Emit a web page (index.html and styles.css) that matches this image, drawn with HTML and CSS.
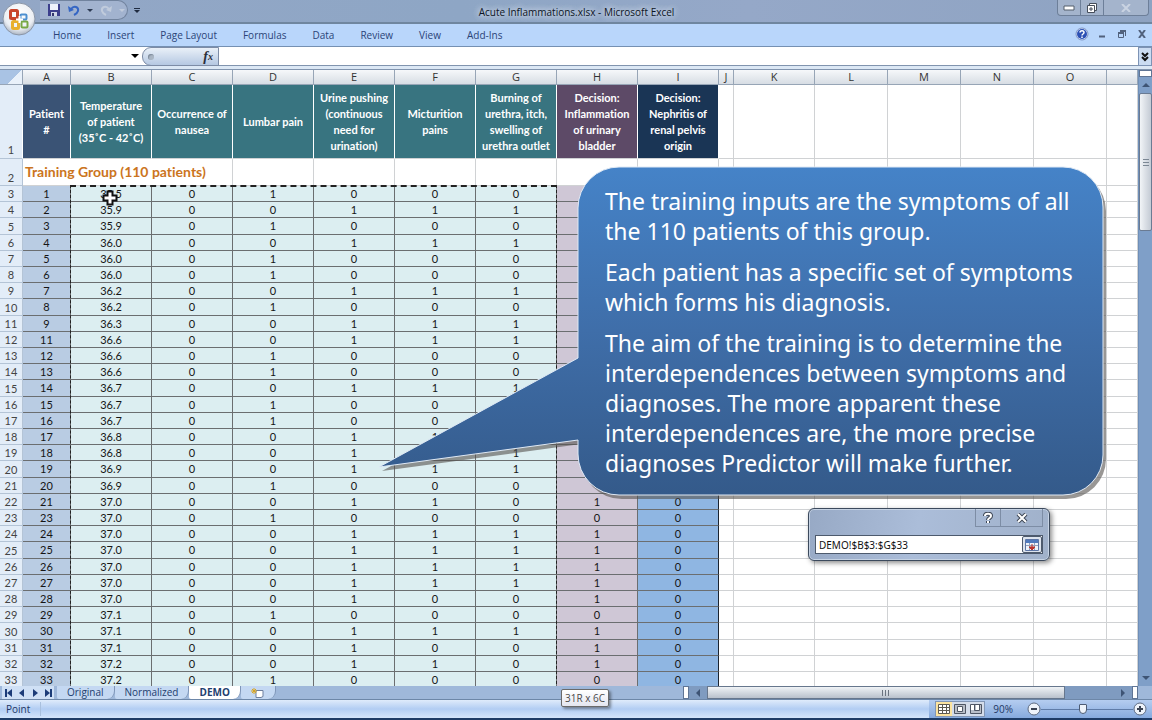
FILE: index.html
```html
<!doctype html>
<html lang="en">
<head>
    <meta charset="utf-8">
    <title>Acute Inflammations.xlsx - Microsoft Excel</title>
    <meta name="viewport" content="width=device-width, initial-scale=1">
    <link rel="stylesheet" href="styles.css">
</head>

<body>
<header class="titlebar">
    <div class="quick-access">
        <button type="button" aria-label="Save">
            <svg width="14" height="14" viewBox="0 0 14 14"><path d="M1 1h12v12H1z" fill="#3c3f8c"/><path d="M3 1h8v6H3z" fill="#eef2fb"/><path d="M4 9h6v4H4z" fill="#cfd6e6"/><path d="M5 10h2v3H5z" fill="#33376e"/></svg>
        </button>
        <button type="button" aria-label="Undo">
            <svg width="12" height="12" viewBox="0 0 12 12"><path d="M3 5c3-4 8-2 7 2-.5 2-2 3-4 4" fill="none" stroke="#3566c4" stroke-width="2"/><path d="M0 2l1 6 5-2z" fill="#3566c4"/></svg>
        </button>
        <span class="caret"></span>
        <button type="button" aria-label="Redo" disabled>
            <svg width="12" height="12" viewBox="0 0 12 12"><path d="M9 5C6 1 1 3 2 7c.5 2 2 3 4 4" fill="none" stroke="#c0cbdc" stroke-width="2"/><path d="M12 2l-1 6-5-2z" fill="#c0cbdc"/></svg>
        </button>
        <span class="caret faded"></span>
    </div>
    <button type="button" class="customize" aria-label="Customize Quick Access Toolbar">
        <svg width="8" height="6" viewBox="0 0 8 6"><path d="M1 .5h6" stroke="#1f2b40"/><path d="M1 2h6L4 5z" fill="#1f2b40"/></svg>
    </button>
    <h1 class="title">Acute Inflammations.xlsx - Microsoft Excel</h1>
    <div class="window-buttons">
        <button type="button" aria-label="Minimize">
            <svg width="12" height="6" viewBox="0 0 12 6"><path d="M1 1h10v4H1z" fill="#fff" stroke="#555e6b"/></svg>
        </button>
        <button type="button" aria-label="Restore">
            <svg width="12" height="12" viewBox="0 0 12 12"><path d="M3.500 1.500h7v7h-7z" fill="#fff" stroke="#454d5a"/><path d="M1.500 3.500h7v7h-7z" fill="#fff" stroke="#454d5a"/><path d="M4 6h2v2H4z" fill="none" stroke="#454d5a"/></svg>
        </button>
        <button type="button" class="close" aria-label="Close">
            <svg width="10" height="8" viewBox="0 0 10 8"><path d="M1 0l8 8M9 0L1 8" stroke="#c9d3e2" stroke-width="2"/></svg>
        </button>
    </div>
</header>

<button type="button" class="office-button" aria-label="Office Button">
    <svg width="36" height="36" viewBox="0 0 36 36">
        <defs>
            <radialGradient id="orb" cx=".5" cy=".35" r=".65">
                <stop offset="0" stop-color="#fff"/>
                <stop offset=".7" stop-color="#eceff4"/>
                <stop offset="1" stop-color="#aab4c2"/>
            </radialGradient>
        </defs>
        <circle cx="18" cy="18" r="16" fill="url(#orb)" stroke="#8b96a8"/>
        <g fill="none" stroke-width="3">
            <rect x="9.500" y="9.500" width="7" height="8" rx="1" stroke="#c8442c"/>
            <rect x="19.500" y="13.500" width="6" height="5" rx="1" stroke="#4d8fd0" stroke-width="2"/>
            <rect x="11.500" y="20.500" width="6" height="7" rx="1" stroke="#e8b02c"/>
            <rect x="20.500" y="20.500" width="6" height="6" rx="1" stroke="#78a844" stroke-width="2"/>
        </g>
        <path d="M15 18.500h7M18.500 15v7" stroke="#fff" stroke-width="2"/>
    </svg>
</button>

<nav class="ribbon">
    <a href="#">Home</a>
    <a href="#">Insert</a>
    <a href="#">Page Layout</a>
    <a href="#">Formulas</a>
    <a href="#">Data</a>
    <a href="#">Review</a>
    <a href="#">View</a>
    <a href="#">Add-Ins</a>
    <div class="book-buttons">
        <button type="button" aria-label="Help">
            <svg width="14" height="14" viewBox="0 0 14 14"><circle cx="7" cy="7" r="6" fill="#dfe9fa" stroke="#7f95c4"/><circle cx="7" cy="7" r="5" fill="#2c50b4"/><path d="M5 5.500c0-2.500 4-2.500 4 0C9 7 7 7 7 8.500M7 9.500V11" fill="none" stroke="#fff" stroke-width="1.500"/></svg>
        </button>
        <button type="button" aria-label="Minimize workbook">
            <svg width="8" height="8" viewBox="0 0 8 8"><path d="M1 6.500h6" stroke="#51617c" stroke-width="2"/></svg>
        </button>
        <button type="button" aria-label="Restore workbook">
            <svg width="8" height="8" viewBox="0 0 8 8"><path d="M2 1h6v5M0 3h6" fill="none" stroke="#51617c" stroke-width="2"/><path d="M.5 3.500h5v4h-5z" fill="none" stroke="#51617c"/></svg>
        </button>
        <button type="button" aria-label="Close workbook">
            <svg width="8" height="8" viewBox="0 0 8 8"><path d="M1 0l6 8M7 0L1 8" stroke="#51617c" stroke-width="2"/></svg>
        </button>
    </div>
</nav>

<div class="formula-bar">
    <input type="text" class="name-box" aria-label="Name Box">
    <button type="button" class="name-arrow" aria-label="Open names"><span class="caret big"></span></button>
    <div class="fx">
        <span class="knob"></span>
        <button type="button" aria-label="Insert Function"><i>f</i><sub>x</sub></button>
    </div>
    <input type="text" class="formula" aria-label="Formula">
    <button type="button" class="expand" aria-label="Expand Formula Bar">
        <svg width="8" height="10" viewBox="0 0 8 10"><path d="M1 1l3 3 3-3M1 5l3 3 3-3" fill="none" stroke="#111" stroke-width="2"/></svg>
    </button>
</div>

<main class="workspace">
    <div class="sheet">
        <table class="grid">
            <colgroup>
                <col class="col-head"><col class="col-id">
                <col class="col-data"><col class="col-data"><col class="col-data"><col class="col-data">
                <col class="col-data"><col class="col-data"><col class="col-data"><col class="col-data">
                <col class="col-gap"><col class="col-data">
                <col class="col-free"><col class="col-free"><col class="col-free"><col class="col-free">
                <col>
            </colgroup>
            <thead>
                <tr class="letters">
                    <th class="corner"></th>
                    <th>A</th><th>B</th><th>C</th><th>D</th><th>E</th><th>F</th><th>G</th><th>H</th><th>I</th>
                    <th>J</th><th>K</th><th>L</th><th>M</th><th>N</th><th>O</th><th></th>
                </tr>
            </thead>
            <tbody id="rows">
                <tr class="captions">
                    <th class="num">1</th>
                    <th class="patient">Patient<br>#</th>
                    <th class="symptom">Temperature<br>of patient<br>(35˚C - 42˚C)</th>
                    <th class="symptom">Occurrence of<br>nausea</th>
                    <th class="symptom">Lumbar pain</th>
                    <th class="symptom">Urine pushing<br>(continuous<br>need for<br>urination)</th>
                    <th class="symptom">Micturition<br>pains</th>
                    <th class="symptom">Burning of<br>urethra, itch,<br>swelling of<br>urethra outlet</th>
                    <th class="bladder">Decision:<br>Inflammation<br>of urinary<br>bladder</th>
                    <th class="renal">Decision:<br>Nephritis of<br>renal pelvis<br>origin</th>
                    <td></td><td></td><td></td><td></td><td></td><td></td><td></td>
                </tr>
                <tr class="group">
                    <th class="num">2</th>
                    <td colspan="3" class="group-name">Training Group (110 patients)</td>
                    <td></td><td></td><td></td><td></td><td></td><td></td>
                    <td></td><td></td><td></td><td></td><td></td><td></td><td></td>
                </tr>
            </tbody>
        </table>
        <div class="marquee"></div>
    </div>
    <div class="vscroll">
        <span class="split"></span>
        <button type="button" aria-label="Scroll up"><span class="arrow up"></span></button>
        <span class="thumb"></span>
        <button type="button" class="down" aria-label="Scroll down"><span class="arrow down"></span></button>
    </div>
</main>

<div class="tab-strip">
    <div class="sheet-tabs">
        <button type="button" class="step" aria-label="First sheet"><svg width="8" height="8" viewBox="0 0 8 8"><path d="M1 0v8" stroke="#1c3c78" stroke-width="2"/><path d="M7 0v8L2 4z" fill="#1c3c78"/></svg></button>
        <button type="button" class="step" aria-label="Previous sheet"><svg width="8" height="8" viewBox="0 0 8 8"><path d="M6 0v8L1 4z" fill="#1c3c78"/></svg></button>
        <button type="button" class="step" aria-label="Next sheet"><svg width="8" height="8" viewBox="0 0 8 8"><path d="M2 0v8l5-4z" fill="#1c3c78"/></svg></button>
        <button type="button" class="step" aria-label="Last sheet"><svg width="8" height="8" viewBox="0 0 8 8"><path d="M7 0v8" stroke="#1c3c78" stroke-width="2"/><path d="M1 0v8l5-4z" fill="#1c3c78"/></svg></button>
        <a href="#" class="tab">Original</a>
        <a href="#" class="tab">Normalized</a>
        <a href="#" class="tab active">DEMO</a>
        <button type="button" class="tab add" aria-label="Insert Worksheet">
            <svg width="14" height="10" viewBox="0 0 14 10"><path d="M5 2.500h7v6l-2 1H5z" fill="#fff" stroke="#6d7f9e"/><path d="M3 0v6M0 3h6M1 1l4 4M5 1L1 5" stroke="#d9a520"/></svg>
        </button>
    </div>
    <div class="hscroll">
        <span class="split"></span>
        <button type="button" aria-label="Scroll left"><span class="arrow left"></span></button>
        <div class="track"><span class="thumb"></span></div>
        <button type="button" aria-label="Scroll right"><span class="arrow right"></span></button>
        <span class="split"></span>
    </div>
</div>

<footer class="status">
    <span class="mode">Point</span>
    <div class="view-tools">
        <div class="views">
            <button type="button" class="on" aria-label="Normal"><svg width="12" height="10" viewBox="0 0 12 10"><path d="M.5.5h11v9H.5zM.5 3.500h11M.5 6.500h11M4.500 0v10M8.500 0v10" fill="#fff" stroke="#5d5a50"/></svg></button>
            <button type="button" aria-label="Page Layout"><svg width="12" height="10" viewBox="0 0 12 10"><path d="M.5.5h11v9H.5z" fill="#b9bec8" stroke="#4f5664"/><path d="M3.500 2.500h5v5h-5z" fill="#fff" stroke="#4f5664"/></svg></button>
            <button type="button" aria-label="Page Break Preview"><svg width="12" height="10" viewBox="0 0 12 10"><path d="M.5.5h11v9H.5z" fill="#b9bec8" stroke="#4f5664"/><path d="M1 1h3v5H1zM6 1h3v5H6z" fill="#fff"/><path d="M4.500 0v6.500h5V0" fill="none" stroke="#4f5664"/></svg></button>
        </div>
        <span class="percent">90%</span>
        <button type="button" class="zoom-button" aria-label="Zoom out"><svg width="14" height="14" viewBox="0 0 14 14"><circle cx="7" cy="7" r="6" fill="#eef3fa" stroke="#5f6c82"/><path d="M4 7h6" stroke="#3a4353" stroke-width="2"/></svg></button>
        <input type="range" class="zoom" min="0" max="100" value="45" aria-label="Zoom">
        <button type="button" class="zoom-button" aria-label="Zoom in"><svg width="14" height="14" viewBox="0 0 14 14"><circle cx="7" cy="7" r="6" fill="#eef3fa" stroke="#5f6c82"/><path d="M4 7h6M7 4v6" stroke="#3a4353" stroke-width="2"/></svg></button>
    </div>
</footer>

<aside class="callout">
    <svg class="bubble" width="732" height="336" viewBox="0 0 732 336">
        <defs>
            <linearGradient id="fill" x1="0" y1="0" x2="0" y2="1">
                <stop offset="0" stop-color="#4583c8"/>
                <stop offset=".5" stop-color="#3f6ea9"/>
                <stop offset="1" stop-color="#345a8a"/>
            </linearGradient>
        </defs>
        <path d="M240 1H684a40 40 0 0 1 40 40V289a40 40 0 0 1-40 40H240a41 41 0 0 1-41-41V274L0 301L199 192V42a41 41 0 0 1 41-41z" transform="translate(3 4)" fill="#55524f" fill-opacity=".6"/>
        <path d="M240 1H684a40 40 0 0 1 40 40V289a40 40 0 0 1-40 40H240a41 41 0 0 1-41-41V274L0 301L199 192V42a41 41 0 0 1 41-41z" fill="url(#fill)" stroke="#dfe9f5"/>
    </svg>
    <div class="callout-text">
        <p>The training inputs are the symptoms of all<br>the 110 patients of this group.</p>
        <p>Each patient has a specific set of symptoms<br>which forms his diagnosis.</p>
        <p>The aim of the training is to determine the<br>interdependences between symptoms and<br>diagnoses. The more apparent these<br>interdependences are, the more precise<br>diagnoses Predictor will make further.</p>
    </div>
</aside>

<form class="range-dialog">
    <div class="dialog-bar">
        <button type="button" aria-label="Help">
            <svg width="10" height="12" viewBox="0 0 10 12"><path d="M2 4c0-3 6-3 6 0 0 2-3 2-3 4M5 9v2" fill="none" stroke="#3d4654" stroke-width="4"/><path d="M2 4c0-3 6-3 6 0 0 2-3 2-3 4M5 9v2" fill="none" stroke="#fff" stroke-width="2"/></svg>
        </button>
        <button type="button" class="close" aria-label="Close">
            <svg width="12" height="10" viewBox="0 0 12 10"><path d="M2 1l8 8M10 1L2 9" stroke="#3d4654" stroke-width="4"/><path d="M2 1l8 8M10 1L2 9" stroke="#fff" stroke-width="2"/></svg>
        </button>
    </div>
    <div class="range-field">
        <input type="text" value="DEMO!$B$3:$G$33" aria-label="Range">
        <button type="button" aria-label="Expand dialog">
            <svg width="14" height="12" viewBox="0 0 14 12"><path d="M.5.5h13v11H.5z" fill="#eef2f8" stroke="#5d76a6"/><path d="M1 1h12v3H1z" fill="#4f79bd"/><path d="M1 6.500h12M4.500 4v7M9.500 4v7" stroke="#93a2bc"/><path d="M7 5v4M4 8h6l-3 3z" fill="#b8322c" stroke="#b8322c"/></svg>
        </button>
    </div>
</form>

<div class="size-tip">31R x 6C</div>

<svg class="cross-cursor" width="16" height="16" viewBox="0 0 16 16"><path d="M5.500 1.500h5v4h4v5h-4v4h-5v-4h-4v-5h4z" fill="#fff" stroke="#111" stroke-width="2"/></svg>

<script src="rows.js"></script>
</body>
</html>
```

FILE: styles.css
```css
* {
    box-sizing: border-box;
}

body {
    display: flex;
    flex-direction: column;
    height: 100vh;
    margin: 0;
    overflow: hidden;
    background: #b9d4f8;
    color: #1f2c44;
    font-family: "Open Sans", "Noto Sans", sans-serif;
    font-size: 10px;
}

button {
    display: flex;
    align-items: center;
    justify-content: center;
    margin: 0;
    padding: 0;
    border: 0;
    background: none;
    color: inherit;
    font: inherit;
}

input {
    min-width: 0;
    margin: 0;
    padding: 0 3px;
    border: 0;
    background: #fff;
    font: inherit;
}

a {
    color: inherit;
    text-decoration: none;
}

.caret {
    border: 3px solid transparent;
    border-top-color: #2c3a52;
    border-bottom: 0;
}

.caret.big {
    border-width: 4px 4px 0;
    border-top-color: #000;
}

.caret.faded {
    border-top-color: #c0cbdc;
}

.arrow {
    border: 4px solid transparent;
}

.arrow.up { border-bottom-color: #3e5474; border-top: 0; }
.arrow.down { border-top-color: #3e5474; border-bottom: 0; }
.arrow.left { border-right-color: #3e5474; border-left: 0; }
.arrow.right { border-left-color: #3e5474; border-right: 0; }

/* title bar */
.titlebar {
    display: flex;
    flex: none;
    height: 24px;
    padding-left: 40px;
    border-bottom: 2px solid #6f869f;
    background: linear-gradient(90deg, #93a7c6, #8ea6c5 40%, #95a8c8 65%, #8ea3c2);
}

.quick-access {
    display: flex;
    align-items: center;
    gap: 7px;
    width: 88px;
    height: 20px;
    padding-left: 7px;
    border: 1px solid #71839e;
    border-left: 0;
    border-radius: 0 10px 10px 0;
    background: #a2b3cf;
}

.customize {
    width: 18px;
}

.title {
    flex: 1;
    margin: 0;
    padding-right: 50px;
    color: #0d1524;
    font-size: 10px;
    font-weight: normal;
    line-height: 24px;
    text-align: center;
    text-shadow: 0 0 6px #dfe7f2, 0 0 6px #dfe7f2;
    white-space: nowrap;
}

.window-buttons {
    display: flex;
    width: 92px;
    height: 16px;
    margin-right: 3px;
    border: 1px solid #6d7f99;
    border-top: 0;
    border-radius: 0 0 4px 4px;
    background: #a4b4cc;
}

.window-buttons button {
    flex: 1;
    border-right: 1px solid #6d7f99;
}

.window-buttons .close {
    flex: 2;
    border: 0;
}

.office-button {
    position: absolute;
    top: 1px;
    left: 1px;
}

/* ribbon */
.ribbon {
    display: flex;
    align-items: center;
    flex: none;
    gap: 26px;
    height: 23px;
    padding-left: 53px;
    border-bottom: 1px solid #7590b2;
    background: #b9d6fb;
    color: #2b4478;
}

.book-buttons {
    display: flex;
    align-items: center;
    gap: 6px;
    margin: 0 3px 2px auto;
}

.book-buttons button {
    width: 14px;
}

.formula-bar {
    display: flex;
    align-items: flex-start;
    flex: none;
    height: 23px;
    border-bottom: 1px solid #8194ae;
    background: linear-gradient(#fff 18px, #8194ae 18px 19px, #dce8f5 19px);
}

.name-box {
    width: 128px;
    height: 18px;
}

.name-arrow {
    width: 14px;
    height: 18px;
}

.fx {
    display: flex;
    align-items: center;
    justify-content: space-between;
    width: 77px;
    height: 19px;
    padding: 0 5px;
    border: 1px solid #7d8ca6;
    border-radius: 9px 0 0 9px;
    background: linear-gradient(#e9f0f8, #b5c8e2);
}

.fx button {
    color: #2a2f3a;
    font-family: "Liberation Serif", serif;
    font-size: 14px;
    font-weight: bold;
}

.fx sub {
    font-size: 10px;
    font-style: italic;
}

.knob {
    width: 6px;
    height: 6px;
    border-radius: 50%;
    background: #aab6c4;
    box-shadow: inset 1px 1px 1px #7f8c9c;
}

.formula {
    flex: 1;
    height: 18px;
}

.expand {
    width: 14px;
    height: 19px;
    border: 1px solid #7d93b5;
    background: #cbdcf2;
}

/* worksheet */
.workspace {
    display: flex;
    flex: 1;
    min-height: 0;
}

.sheet {
    position: relative;
    flex: 1;
    overflow: hidden;
    background: #fff;
}

.grid {
    width: 100%;
    border-collapse: separate;
    border-spacing: 0;
    table-layout: fixed;
    color: #151515;
    font-family: Lato, sans-serif;
    font-size: 11px;
    font-variant-ligatures: none;
    line-height: 14px;
    text-align: center;
}

.grid th,
.grid td {
    padding: 0;
    overflow: hidden;
    border-right: 1px solid #d0d2d4;
    border-bottom: 1px solid #d0d2d4;
    white-space: nowrap;
}

.col-head { width: 23px; }
.col-id { width: 48px; }
.col-data { width: 81px; }
.col-gap { width: 15px; }
.col-free { width: 73px; }

.grid .letters th {
    height: 15px;
    border-color: #97a5b6;
    background: linear-gradient(#f6f8fa, #d7dde4);
    color: #333;
    font-family: "Open Sans", sans-serif;
    font-weight: normal;
}

.grid .letters .corner {
    background: linear-gradient(135deg, #a9c3e4 60%, #e9f1fa 60%);
}

.grid .num {
    border-color: #b4c4d6;
    background: #e3edf8;
    color: #444;
    font-weight: normal;
    vertical-align: bottom;
}

.captions th {
    height: 74px;
    color: #fff;
    line-height: 16px;
}

.grid .captions th {
    border-right-color: #fff;
}

.grid .patient { background: #3a5375; }
.grid .symptom { background: #387480; }
.grid .bladder { background: #5d4a67; }
.grid .renal { background: #1a3555; }

.group td {
    height: 27px;
}

.grid .group-name {
    padding-left: 2px;
    color: #cb7420;
    font-size: 14px;
    font-weight: bold;
    text-align: left;
}

.record td {
    height: 16px;
}

/* every fifth row takes a spare pixel, as the 90% zoom rounds it */
.record:nth-child(5n) td {
    height: 17px;
}

.grid .id,
.grid .input,
.grid .out-bladder,
.grid .out-renal {
    border-color: #6b6e70;
}

.id { background: #b9cce3; }
.input { background: #dceef1; }
.out-bladder { background: #cfc7d6; }
.out-renal { background: #8fb6e2; }

.grid .out-renal {
    border-right-color: #1b2430;
}

.marquee {
    position: absolute;
    top: 115px;
    bottom: -8px;
    left: 70px;
    width: 487px;
    border: dashed #222;
    border-width: 2px 1px;
}

/* scroll bars */
.vscroll {
    display: flex;
    flex-direction: column;
    width: 14px;
    border-left: 1px solid #6f8fb8;
    background: #7f9fc8;
}

.vscroll .split {
    height: 7px;
    border: 1px solid #5f7595;
    background: #fff;
}

.vscroll button {
    height: 16px;
}

.vscroll .thumb {
    height: 138px;
    border: 1px solid #6a7b93;
    border-radius: 2px;
    background:
        repeating-linear-gradient(#7b8794 0 1px, transparent 1px 3px) center / 6px 7px no-repeat,
        linear-gradient(90deg, #f1f4f7, #c3cad4);
}

.vscroll button.down {
    margin-top: auto;
}

.tab-strip {
    display: flex;
    flex: none;
    height: 14px;
    padding-right: 14px;
    border-bottom: 1px solid #6d87a8;
    background: #9fb8da;
}

.sheet-tabs {
    display: flex;
    flex: 1;
    padding-left: 2px;
}

.step {
    width: 13px;
    background: #cfe0f5;
}

.tab {
    display: flex;
    align-items: center;
    justify-content: center;
    padding: 0 10px;
    border-right: 1px solid #7f96b8;
    border-radius: 0 0 8px 2px;
    background: #c4d8f2;
    color: #23406f;
    line-height: 13px;
}

.step + .tab {
    margin-left: 3px;
}

.tab.active {
    background: #fff;
    font-weight: bold;
}

.hscroll {
    display: flex;
    width: 40%;
    background: #7f9bc0;
}

.hscroll .split {
    width: 6px;
    border: 1px solid #5f7595;
    background: #fff;
}

.hscroll button {
    width: 18px;
}

.track {
    display: flex;
    flex: 1;
}

.hscroll .thumb {
    width: 88%;
    border: 1px solid #67778d;
    background:
        repeating-linear-gradient(90deg, #6b7480 0 1px, transparent 1px 3px) center / 7px 6px no-repeat,
        linear-gradient(#f0f3f6, #b9c1cc);
}

/* status bar */
.status {
    display: flex;
    align-items: center;
    justify-content: space-between;
    flex: none;
    height: 20px;
    border-bottom: 2px solid #1d3b66;
    background: linear-gradient(#dfebfb, #b2cdf3 50%, #d4e5fb);
    color: #1e3765;
}

.mode {
    padding: 0 10px 0 6px;
    border-right: 1px solid #a9c0de;
}

.view-tools {
    display: flex;
    align-items: center;
    height: 18px;
    padding: 0 5px 0 6px;
    background: linear-gradient(#b5cdf0, #86aade);
}

.views {
    display: flex;
    border: 1px solid #8196b6;
}

.views button {
    width: 16px;
    height: 14px;
    background: #d4dcea;
}

.views .on {
    background: #fbe3a0;
}

.percent {
    padding: 0 14px 0 8px;
}

.zoom {
    width: 92px;
    height: 14px;
    padding: 0;
    appearance: none;
    background: linear-gradient(#5f7ca8, #5f7ca8) center / 100% 1px no-repeat;
}

.zoom::-webkit-slider-thumb {
    appearance: none;
    width: 8px;
    height: 10px;
    border: 1px solid #4d5c74;
    border-radius: 1px 1px 4px 4px;
    background: #eef3fa;
}

/* floating pieces */
.callout {
    position: absolute;
    top: 166px;
    left: 379px;
    width: 732px;
    height: 336px;
}

.bubble {
    position: absolute;
}

.callout-text {
    position: relative;
    padding: 20px 0 0 226px;
    color: #fff;
    font-family: "Noto Sans", "Open Sans", sans-serif;
    font-size: 23px;
    line-height: 30px;
    white-space: nowrap;
}

.callout-text p {
    margin: 0 0 11px;
}

.range-dialog {
    position: absolute;
    top: 508px;
    left: 808px;
    width: 242px;
    padding: 0 6px 6px;
    border: 1px solid #3c4a5d;
    border-radius: 6px;
    background: linear-gradient(100deg, #97a9c5, #abbdd9 45%, #a0b1ca);
    box-shadow: inset 0 0 0 1px #c6d3e4, 2px 2px 5px rgba(0, 0, 0, 0.45);
}

.dialog-bar {
    display: flex;
    justify-content: flex-end;
    margin-bottom: 8px;
}

.dialog-bar button {
    width: 26px;
    height: 18px;
    border: 1px solid #7d8da5;
    border-top: 0;
}

.dialog-bar .close {
    width: 42px;
    border-left: 0;
}

.range-field {
    display: flex;
    height: 19px;
    border: 1px solid #4d5a6d;
    background: #fff;
}

.range-field input {
    flex: 1;
    color: #111;
    font-family: "Noto Sans", "Open Sans", sans-serif;
}

.range-field button {
    width: 20px;
    border: 1px solid #4d5a6d;
    border-radius: 2px;
    background: #dde4ee;
}

.size-tip {
    position: absolute;
    top: 689px;
    left: 561px;
    padding: 0 3px;
    border: 1px solid #6a6a6a;
    border-radius: 2px;
    background: linear-gradient(#fff, #e4e6f0);
    box-shadow: 2px 2px 3px rgba(0, 0, 0, 0.4);
    color: #4a4a4a;
    line-height: 16px;
}

.cross-cursor {
    position: absolute;
    top: 190px;
    left: 102px;
}
```

FILE: rows.js
```js
// patient, temperature, then C..I
var records = [
    [1, '35.5', 0, 1, 0, 0, 0, '', ''],
    [2, '35.9', 0, 0, 1, 1, 1, '', ''],
    [3, '35.9', 0, 1, 0, 0, 0, '', ''],
    [4, '36.0', 0, 0, 1, 1, 1, '', ''],
    [5, '36.0', 0, 1, 0, 0, 0, '', ''],
    [6, '36.0', 0, 1, 0, 0, 0, '', ''],
    [7, '36.2', 0, 0, 1, 1, 1, '', ''],
    [8, '36.2', 0, 1, 0, 0, 0, '', ''],
    [9, '36.3', 0, 0, 1, 1, 1, '', ''],
    [11, '36.6', 0, 0, 1, 1, 1, '', ''],
    [12, '36.6', 0, 1, 0, 0, 0, '', ''],
    [13, '36.6', 0, 1, 0, 0, 0, '', ''],
    [14, '36.7', 0, 0, 1, 1, 1, '', ''],
    [15, '36.7', 0, 1, 0, 0, 0, '', ''],
    [16, '36.7', 0, 1, 0, 0, 0, '', ''],
    [17, '36.8', 0, 0, 1, 1, '', '', ''],
    [18, '36.8', 0, 0, 1, '', 1, '', ''],
    [19, '36.9', 0, 0, 1, 1, 1, '', ''],
    [20, '36.9', 0, 1, 0, 0, 0, '', ''],
    [21, '37.0', 0, 0, 1, 1, 0, 1, 0],
    [23, '37.0', 0, 1, 0, 0, 0, 0, 0],
    [24, '37.0', 0, 0, 1, 1, 1, 1, 0],
    [25, '37.0', 0, 0, 1, 1, 1, 1, 0],
    [26, '37.0', 0, 0, 1, 1, 1, 1, 0],
    [27, '37.0', 0, 0, 1, 1, 1, 1, 0],
    [28, '37.0', 0, 0, 1, 0, 0, 1, 0],
    [29, '37.1', 0, 1, 0, 0, 0, 0, 0],
    [30, '37.1', 0, 0, 1, 1, 1, 1, 0],
    [31, '37.1', 0, 0, 1, 0, 0, 1, 0],
    [32, '37.2', 0, 0, 1, 1, 0, 1, 0],
    [33, '37.2', 0, 1, 0, 0, 0, 0, 0]
];

var classes = ['id', 'input', 'input', 'input', 'input', 'input', 'input', 'out-bladder', 'out-renal'];
var body = document.getElementById('rows');

records.forEach(function (record, i) {
    var tr = document.createElement('tr');
    tr.className = 'record';

    var html = '<th class="num">' + (i + 3) + '</th>';
    record.forEach(function (value, c) {
        html += '<td class="' + classes[c] + '">' + value + '</td>';
    });
    // J onwards is empty
    html += '<td></td><td></td><td></td><td></td><td></td><td></td><td></td>';

    tr.innerHTML = html;
    body.appendChild(tr);
});
```
